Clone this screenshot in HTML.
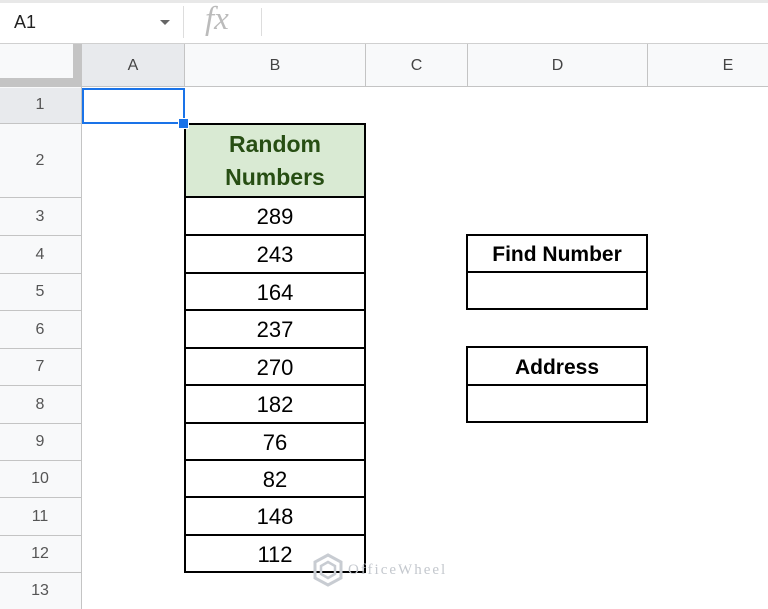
<!DOCTYPE html>
<html><head><style>
*{margin:0;padding:0;box-sizing:border-box}
body{width:768px;height:609px;overflow:hidden;background:#fff;font-family:"Liberation Sans",Arial,sans-serif;position:relative}
.a{position:absolute}
.hl{position:absolute;height:1px;background:#c4c4c4}
.vl{position:absolute;width:1px;background:#c4c4c4}
.ch{position:absolute;top:45px;height:41px;line-height:41px;text-align:center;color:#444;font-size:16px}
.rh{position:absolute;left:0;width:80px;text-align:center;color:#555;font-size:16px;display:flex;align-items:center;justify-content:center}
.bl{position:absolute;background:#000}
.n{position:absolute;left:185px;width:180px;text-align:center;font-size:22px;color:#000}
</style></head><body>
<div class="a" style="left:0;top:0;width:768px;height:3px;background:#e8e8e8"></div>
<div class="a" style="left:14px;top:12px;font-size:18px;color:#222">A1</div>
<div class="a" style="left:160px;top:20px;width:0;height:0;border-left:5px solid transparent;border-right:5px solid transparent;border-top:5px solid #666"></div>
<div class="vl" style="left:183px;top:6px;height:32px;background:#ddd"></div>
<div class="a" style="left:205px;top:1px;font-family:'Liberation Serif',serif;font-style:italic;font-size:33px;color:#bbb">fx</div>
<div class="vl" style="left:261px;top:8px;height:28px;background:#ddd"></div>
<div class="hl" style="left:0;top:43px;width:768px;background:#d0d0d0"></div>
<div class="a" style="left:0;top:44px;width:768px;height:42px;background:#f8f9fa"></div>
<div class="a" style="left:82px;top:44px;width:102px;height:42px;background:#e8eaed"></div>
<div class="a" style="left:0;top:44px;width:82px;height:565px;background:#f8f9fa"></div>
<div class="a" style="left:0;top:88px;width:82px;height:35px;background:#e8eaed"></div>
<div class="a" style="left:73px;top:44px;width:9px;height:36px;background:#c4c4c4"></div>
<div class="a" style="left:0;top:78px;width:82px;height:8px;background:#c4c4c4"></div>
<div class="a" style="left:0;top:44px;width:73px;height:34px;background:#f8f9fa"></div>
<div class="hl" style="left:0;top:86px;width:768px"></div>
<div class="vl" style="left:81px;top:44px;height:565px"></div>
<div class="vl" style="left:184px;top:44px;height:42px"></div>
<div class="vl" style="left:365px;top:44px;height:42px"></div>
<div class="vl" style="left:467px;top:44px;height:42px"></div>
<div class="vl" style="left:647px;top:44px;height:42px"></div>
<div class="ch" style="left:82px;width:102px">A</div>
<div class="ch" style="left:185px;width:180px">B</div>
<div class="ch" style="left:366px;width:101px">C</div>
<div class="ch" style="left:468px;width:179px">D</div>
<div class="ch" style="left:648px;width:160px">E</div>
<div class="rh" style="top:87px;height:36px">1</div><div class="hl" style="left:0;top:123px;width:81px"></div>
<div class="rh" style="top:124px;height:73px">2</div><div class="hl" style="left:0;top:197px;width:81px"></div>
<div class="rh" style="top:198px;height:37px">3</div><div class="hl" style="left:0;top:235px;width:81px"></div>
<div class="rh" style="top:236px;height:37px">4</div><div class="hl" style="left:0;top:273px;width:81px"></div>
<div class="rh" style="top:274px;height:36px">5</div><div class="hl" style="left:0;top:310px;width:81px"></div>
<div class="rh" style="top:311px;height:37px">6</div><div class="hl" style="left:0;top:348px;width:81px"></div>
<div class="rh" style="top:349px;height:36px">7</div><div class="hl" style="left:0;top:385px;width:81px"></div>
<div class="rh" style="top:386px;height:37px">8</div><div class="hl" style="left:0;top:423px;width:81px"></div>
<div class="rh" style="top:424px;height:36px">9</div><div class="hl" style="left:0;top:460px;width:81px"></div>
<div class="rh" style="top:461px;height:36px">10</div><div class="hl" style="left:0;top:497px;width:81px"></div>
<div class="rh" style="top:498px;height:37px">11</div><div class="hl" style="left:0;top:535px;width:81px"></div>
<div class="rh" style="top:536px;height:36px">12</div><div class="hl" style="left:0;top:572px;width:81px"></div>
<div class="rh" style="top:573px;height:36px">13</div>
<div class="a" style="left:185px;top:124px;width:180px;height:73px;background:#d9ead3"></div>
<div class="a" style="left:185px;top:128px;width:180px;text-align:center;font-weight:bold;font-size:23px;line-height:33px;color:#274e13">Random<br>Numbers</div>
<div class="bl" style="left:184px;top:123px;width:2px;height:450px"></div>
<div class="bl" style="left:364px;top:123px;width:2px;height:450px"></div>
<div class="bl" style="left:184px;top:123px;width:182px;height:2px"></div>
<div class="bl" style="left:184px;top:196px;width:182px;height:2px"></div>
<div class="bl" style="left:184px;top:234px;width:182px;height:2px"></div>
<div class="bl" style="left:184px;top:272px;width:182px;height:2px"></div>
<div class="bl" style="left:184px;top:309px;width:182px;height:2px"></div>
<div class="bl" style="left:184px;top:347px;width:182px;height:2px"></div>
<div class="bl" style="left:184px;top:384px;width:182px;height:2px"></div>
<div class="bl" style="left:184px;top:422px;width:182px;height:2px"></div>
<div class="bl" style="left:184px;top:459px;width:182px;height:2px"></div>
<div class="bl" style="left:184px;top:496px;width:182px;height:2px"></div>
<div class="bl" style="left:184px;top:534px;width:182px;height:2px"></div>
<div class="bl" style="left:184px;top:571px;width:182px;height:2px"></div>
<div class="n" style="top:204px">289</div>
<div class="n" style="top:242px">243</div>
<div class="n" style="top:280px">164</div>
<div class="n" style="top:317px">237</div>
<div class="n" style="top:355px">270</div>
<div class="n" style="top:392px">182</div>
<div class="n" style="top:430px">76</div>
<div class="n" style="top:467px">82</div>
<div class="n" style="top:504px">148</div>
<div class="n" style="top:542px">112</div>
<div class="a" style="left:466px;top:234px;width:182px;height:76px;border:2px solid #000"></div>
<div class="bl" style="left:466px;top:271px;width:182px;height:2px"></div>
<div class="a" style="left:468px;top:243px;width:178px;text-align:center;font-weight:bold;font-size:21px">Find Number</div>
<div class="a" style="left:466px;top:346px;width:182px;height:77px;border:2px solid #000"></div>
<div class="bl" style="left:466px;top:384px;width:182px;height:2px"></div>
<div class="a" style="left:468px;top:356px;width:178px;text-align:center;font-weight:bold;font-size:21px">Address</div>
<div class="a" style="left:82px;top:88px;width:103px;height:36px;border:2px solid #1a73e8"></div>
<div class="a" style="left:178px;top:118px;width:11px;height:11px;background:#1a73e8;border:1px solid #fff"></div>
<svg class="a" style="left:312px;top:553px" width="32" height="34" viewBox="0 0 32 34"><path d="M16 2 L29 9 V25 L16 32 L3 25 V9 Z" fill="none" stroke="#c8ccd2" stroke-width="3"/><path d="M16 9 L23 13 V21 L16 25 L9 21 V13 Z" fill="none" stroke="#c8ccd2" stroke-width="2.5"/></svg>
<div class="a" style="left:348px;top:562px;font-family:'Liberation Serif',serif;font-size:15px;letter-spacing:2px;color:#c4c8ce">OfficeWheel</div>
</body></html>
